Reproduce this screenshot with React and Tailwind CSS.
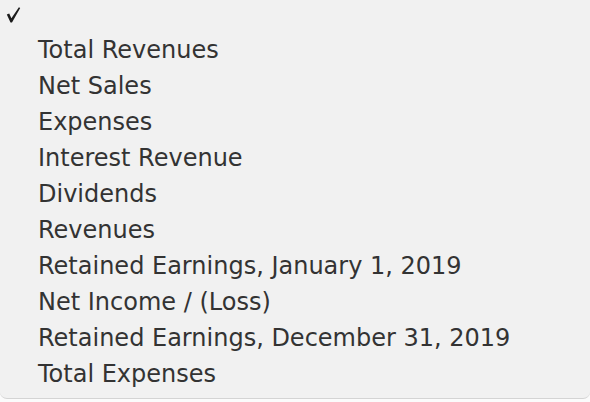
const items = [
  'Total Revenues',
  'Net Sales',
  'Expenses',
  'Interest Revenue',
  'Dividends',
  'Revenues',
  'Retained Earnings, January 1, 2019',
  'Net Income / (Loss)',
  'Retained Earnings, December 31, 2019',
  'Total Expenses',
]

export default function App() {
  return (
    <div className="h-[402px] w-[590px] overflow-hidden bg-[#fbfbfb]">
      <div
        className="h-[399px] w-full rounded-b-[7px] border-b border-[#d4d4d4] bg-[#f1f1f1] text-[24px] leading-9 text-[#333333]"
        style={{ fontFamily: '"DejaVu Sans", Verdana, sans-serif' }}
      >
        <div className="h-[32px]">
          <svg width="24" height="26" viewBox="0 0 24 26">
            <path d="M6.8 14.6 L9.2 13.4 L11.4 18.2 L18.9 7.2 L20.2 8 L12 22.6 L10.5 22.6 Z" fill="#1c1c1c" />
          </svg>
        </div>
        <ul>
          {items.map(t => (
            <li key={t} className="h-9 pl-[38px] whitespace-nowrap">{t}</li>
          ))}
        </ul>
      </div>
    </div>
  )
}
